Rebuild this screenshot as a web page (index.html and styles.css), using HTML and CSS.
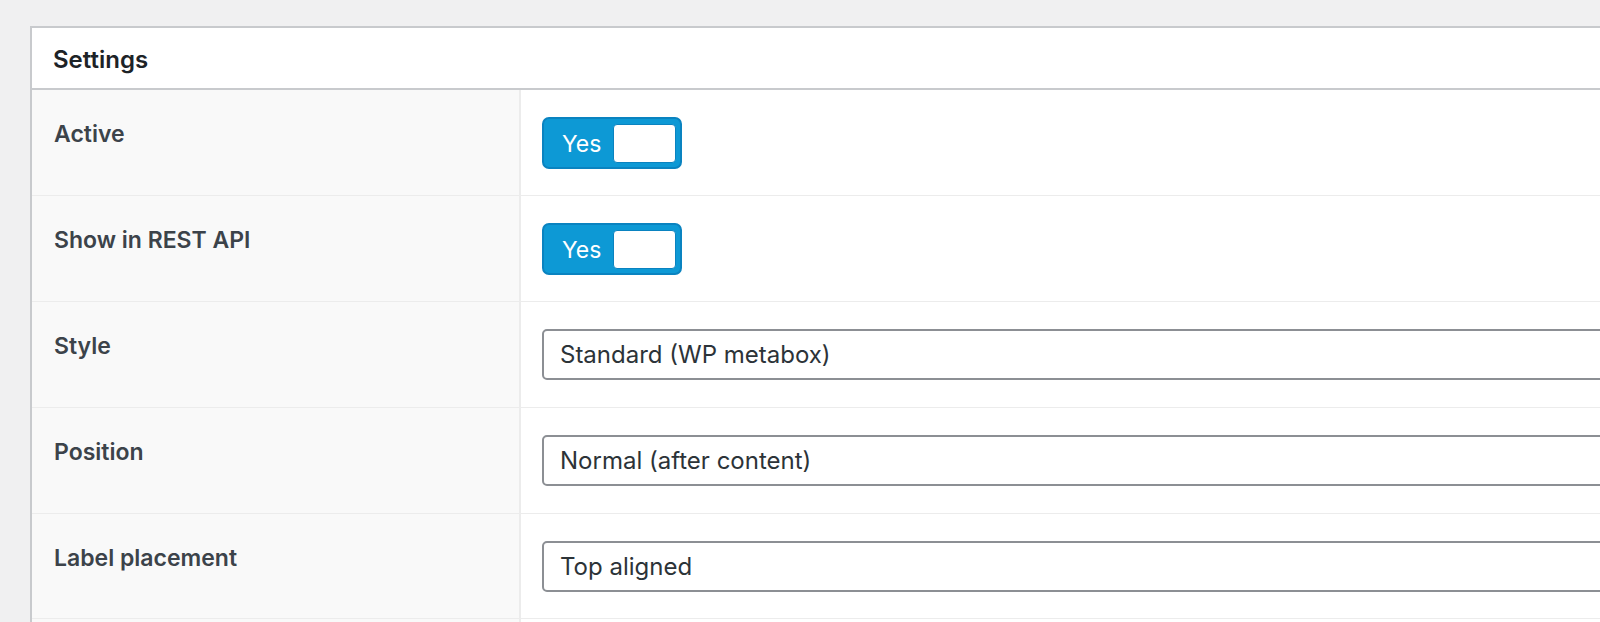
FILE: index.html
```html
<!DOCTYPE html>
<html lang="en">
<head>
<meta charset="utf-8">
<title>Settings</title>
<link rel="stylesheet" href="styles.css">
</head>
<body>
<div class="postbox">
  <div class="postbox-header"><h2 class="postbox-title">Settings</h2></div>
  <div class="fields">
    <div class="field">
      <div class="field-label">Active</div>
      <div class="field-input">
        <div class="switch"><span class="switch-on">Yes</span><span class="switch-slider"></span></div>
      </div>
    </div>
    <div class="field">
      <div class="field-label">Show in REST API</div>
      <div class="field-input">
        <div class="switch"><span class="switch-on">Yes</span><span class="switch-slider"></span></div>
      </div>
    </div>
    <div class="field">
      <div class="field-label">Style</div>
      <div class="field-input"><div class="select">Standard (WP metabox)</div></div>
    </div>
    <div class="field">
      <div class="field-label">Position</div>
      <div class="field-input"><div class="select">Normal (after content)</div></div>
    </div>
    <div class="field">
      <div class="field-label">Label placement</div>
      <div class="field-input"><div class="select">Top aligned</div></div>
    </div>
    <div class="field field-next">
      <div class="field-label"></div>
      <div class="field-input"></div>
    </div>
  </div>
</div>
</body>
</html>
```

FILE: styles.css
```css
html, body {
  margin: 0;
  padding: 0;
}
body {
  background: #f0f0f1;
  height: 622px;
  overflow: hidden;
  font-family: Inter, "Liberation Sans", sans-serif;
  color: #3c434a;
}
.postbox {
  margin: 26px 0 0 30px;
  background: #fff;
  border: 2px solid #c8cacd;
  border-right: none;
  overflow: hidden;
}
.postbox-header {
  display: flex;
  align-items: center;
  padding: 5px 0 0 21px;
  box-sizing: border-box;
  border-bottom: 2px solid #c8cacd;
  height: 62px;
}
.postbox-title {
  margin: 0;
  font-size: 24px;
  font-weight: 600;
  line-height: 1.2;
  color: #1d2327;
}
.field {
  display: grid;
  grid-template-columns: 489px 1fr;
  height: 104.9px;
  border-bottom: 1px solid #ececec;
}
.field-label {
  background: #f9f9f9;
  border-right: 2px solid #ececec;
  padding: 31px 0 0 22px;
  font-size: 23px;
  font-weight: 600;
  line-height: 1.2;
  color: #3c434a;
}
.field-input {
  padding: 27px 0 0 21px;
}
.switch {
  box-sizing: border-box;
  width: 140px;
  height: 52px;
  background: #0d99d5;
  border: 2px solid #0a83c0;
  border-radius: 7px;
  display: flex;
  align-items: center;
  justify-content: space-between;
  padding: 0 4px 0 18px;
}
.switch-on {
  color: #fff;
  font-size: 23px;
  line-height: 1;
  padding-top: 3px;
}
.switch-slider {
  box-sizing: border-box;
  width: 63px;
  height: 39px;
  background: #fff;
  border: 1px solid #0a83c0;
  border-radius: 4px;
  margin-top: 1px;
}
.select {
  box-sizing: border-box;
  width: 1200px;
  height: 51px;
  border: 2px solid #8c8f94;
  border-radius: 5px;
  background: #fff;
  display: flex;
  align-items: center;
  padding-left: 16px;
  font-size: 24px;
  color: #2c3338;
}
```
